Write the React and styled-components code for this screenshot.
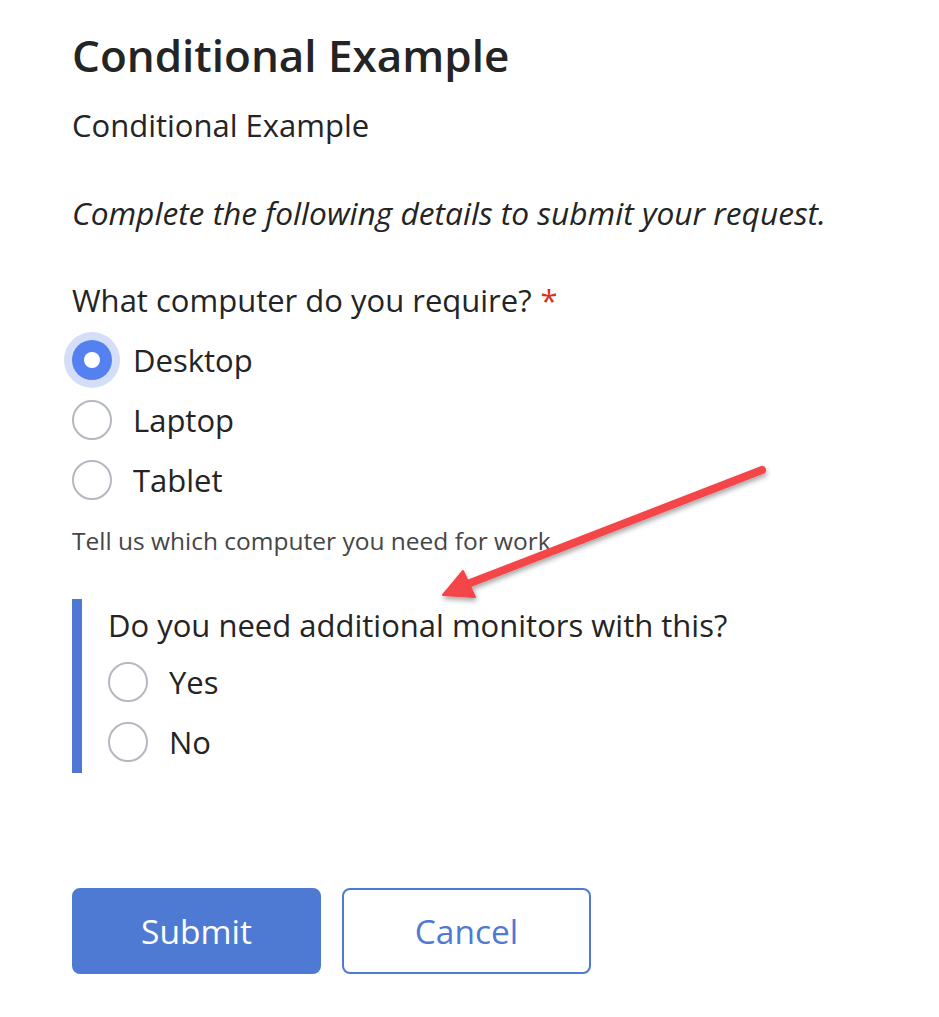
import React from "react";
import styled, { createGlobalStyle } from "styled-components";

const Global = createGlobalStyle`
  html, body { margin: 0; padding: 0; background: #ffffff; }
  body { font-family: "Open Sans", "Noto Sans", sans-serif; color: #242424; }
`;

const Page = styled.div`
  position: relative;
  width: 939px;
  height: 1017px;
  box-sizing: border-box;
  padding: 25px 0 0 72px;
  display: flex;
  flex-direction: column;
`;

const Title = styled.h1`
  margin: 0;
  font-size: 44px;
  font-weight: 600;
  line-height: 60px;
`;

const Subtitle = styled.div`
  margin-top: 20px;
  font-size: 31px;
  line-height: 40px;
`;

const Intro = styled.p`
  margin: 48px 0 0;
  font-size: 31.7px;
  font-style: italic;
  line-height: 40px;
`;

const Question = styled.div`
  margin-top: ${(p) => p.$top || 0}px;
  font-size: 31px;
  line-height: 40px;
`;

const Required = styled.span`
  color: #d9321e;
  margin-left: 9px;
`;

const Options = styled.div`
  display: flex;
  flex-direction: column;
  gap: 20px;
  margin-top: ${(p) => p.$top || 0}px;
`;

const Option = styled.label`
  display: flex;
  align-items: center;
  gap: 21px;
  height: 40px;
  font-size: 31px;
`;

const Radio = styled.span`
  position: relative;
  box-sizing: border-box;
  width: 40px;
  height: 40px;
  flex: none;
  border-radius: 50%;
  border: ${(p) => (p.$checked ? "none" : "2px solid #b4b8bf")};
  background: ${(p) => (p.$checked ? "#5580f0" : "#fff")};
  box-shadow: ${(p) => (p.$checked ? "0 0 0 8px #d4def9" : "none")};
  &::after {
    content: "";
    display: ${(p) => (p.$checked ? "block" : "none")};
    position: absolute;
    left: 12px;
    top: 12px;
    width: 16px;
    height: 16px;
    border-radius: 50%;
    background: #fff;
  }
`;

const Help = styled.div`
  margin-top: 26px;
  font-size: 24.5px;
  line-height: 30px;
  color: #464646;
`;

const Conditional = styled.div`
  margin-top: 43px;
  border-left: 10px solid #4f78d4;
  padding: 6px 0 11px 26px;
  display: flex;
  flex-direction: column;
`;

const Actions = styled.div`
  margin-top: 115px;
  display: flex;
  gap: 21px;
`;

const Button = styled.button`
  box-sizing: border-box;
  width: 249px;
  height: 86px;
  border-radius: 8px;
  font-family: "Open Sans", "Noto Sans", sans-serif;
  font-size: 33.5px;
  cursor: pointer;
  border: 2px solid #4f7ad3;
  background: ${(p) => (p.$primary ? "#4f7ad3" : "#fff")};
  color: ${(p) => (p.$primary ? "#fff" : "#4f7ad3")};
`;

const ArrowLayer = styled.svg`
  position: absolute;
  left: 0;
  top: 0;
  pointer-events: none;
`;

function RadioOption({ label, checked }) {
  return (
    <Option>
      <Radio $checked={checked} />
      {label}
    </Option>
  );
}

export default function App() {
  return (
    <>
      <Global />
      <Page>
        <Title>Conditional Example</Title>
        <Subtitle>Conditional Example</Subtitle>
        <Intro>Complete the following details to submit your request.</Intro>
        <Question $top={47}>
          What computer do you require?<Required>*</Required>
        </Question>
        <Options $top={20}>
          <RadioOption label="Desktop" checked />
          <RadioOption label="Laptop" />
          <RadioOption label="Tablet" />
        </Options>
        <Help>Tell us which computer you need for work</Help>
        <Conditional>
          <Question>Do you need additional monitors with this?</Question>
          <Options $top={17}>
            <RadioOption label="Yes" />
            <RadioOption label="No" />
          </Options>
        </Conditional>
        <Actions>
          <Button $primary>Submit</Button>
          <Button>Cancel</Button>
        </Actions>
        <ArrowLayer width="939" height="1017" viewBox="0 0 939 1017">
          <defs>
            <filter id="shadow" x="-20%" y="-20%" width="140%" height="140%">
              <feDropShadow dx="1" dy="3" stdDeviation="2.5" floodColor="#000" floodOpacity="0.35" />
            </filter>
          </defs>
          <g filter="url(#shadow)" fill="#f4444a" stroke="#f4444a">
            <line x1="762" y1="470" x2="465" y2="585" strokeWidth="8" strokeLinecap="round" />
            <polygon points="443,595 463,571 475,597" strokeWidth="2" strokeLinejoin="round" />
          </g>
        </ArrowLayer>
      </Page>
    </>
  );
}
